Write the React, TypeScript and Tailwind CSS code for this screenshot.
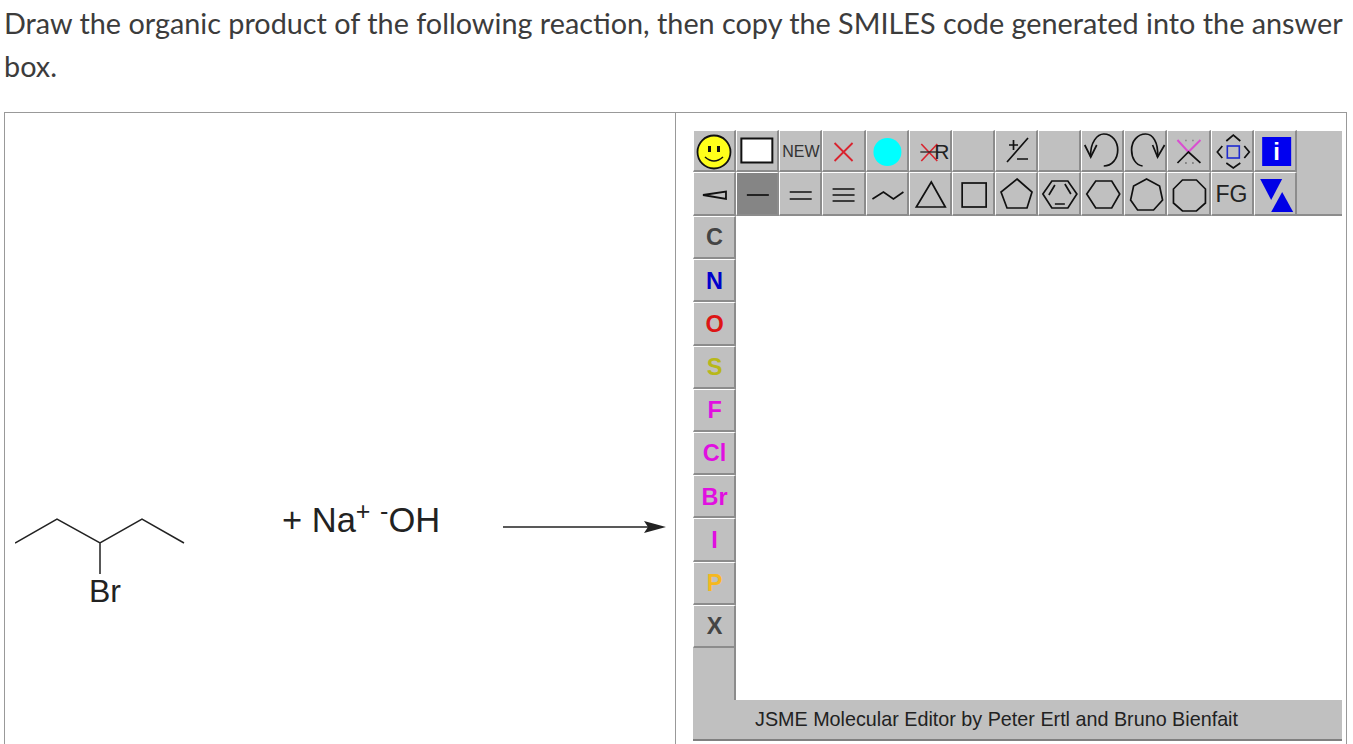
import React from "react";

const W = 43.14;
const line = "#111";

function Svg({ i, row, children }: { i: number; row: 0 | 1; children?: React.ReactNode }) {
  const x = 693 + i * W + 1;
  const y = row === 0 ? 131 : 173;
  const h = row === 0 ? 40 : 41;
  return (
    <svg width={W - 3} height={h} viewBox={`${x} ${y} ${W - 3} ${h}`} fill="none" stroke={line} strokeWidth={1.7} className="block overflow-visible">
      {children}
    </svg>
  );
}

function Cell({ children, dark, h }: { children?: React.ReactNode; dark?: boolean; h: string }) {
  return (
    <div
      className={`${h} w-[43.14px] box-border flex items-center justify-start border-t border-l border-r-2 border-b-2 border-t-white border-l-white border-r-[#8c8c8c] border-b-[#8c8c8c] ${
        dark ? "bg-[#858585]" : "bg-[#c0c0c0]"
      }`}
    >
      {children}
    </div>
  );
}

const row1: React.ReactNode[] = [
  <Svg i={0} row={0} key="a">
    <circle cx={714} cy={152} r={16.5} fill="#ffff1a" strokeWidth={1.8} />
    <rect x={708} y={146} width={3} height={6} fill="#111" stroke="none" />
    <rect x={717} y={146} width={3} height={6} fill="#111" stroke="none" />
    <path d="M705 157 Q714 165 723 157" strokeWidth={1.6} />
  </Svg>,
  <Svg i={1} row={0} key="b">
    <rect x={741.5} y={138.5} width={31} height={24} fill="#fff" strokeWidth={2} />
  </Svg>,
  <span key="c" className="text-[16px] text-[#333] pl-[2px] pt-[3px]">NEW</span>,
  <Svg i={3} row={0} key="d">
    <path d="M835 143 L853 161 M853 143 L835 161" stroke="#d9232e" strokeWidth={1.8} />
  </Svg>,
  <Svg i={4} row={0} key="e">
    <circle cx={887} cy={152} r={14} fill="#00ffff" stroke="none" />
  </Svg>,
  <Svg i={5} row={0} key="f">
    <path d="M921 144 L937 161 M937 144 L921 161" stroke="#d9232e" strokeWidth={1.6} />
    <path d="M920 152 L938 152" stroke="#222" strokeWidth={1.3} />
    <text x={934} y={159} fontSize={21} fill="#222" stroke="none" fontFamily="Liberation Sans">R</text>
  </Svg>,
  <Svg i={6} row={0} key="g" />,
  <Svg i={7} row={0} key="h">
    <path d="M1007 162 L1028 138 M1017 159 L1028 159 M1009 145 L1018 145 M1013.500 140 L1013.500 150" />
  </Svg>,
  <Svg i={8} row={0} key="i" />,
  <Svg i={9} row={0} key="j">
    <path d="M1091 157 C1090 142 1098 134 1104 134 C1113 134 1118 142 1118 150 C1118 159 1112 166 1104 166" />
    <path d="M1085 145 L1091 157 L1097 145" />
  </Svg>,
  <Svg i={10} row={0} key="k">
    <path d="M1143 166 C1136 165 1132 158 1132 150 C1132 141 1138 134 1146 134 C1153 134 1159 142 1158 157" />
    <path d="M1153 145 L1158 157 L1165 145" />
  </Svg>,
  <Svg i={11} row={0} key="l">
    <path d="M1178 140 L1189 152 L1201 140 " stroke="#d94fd0" strokeWidth={2} />
    <path d="M1178 163 L1189 152 L1201 163" />
    <path d="M1186 140.500 h1 M1193 140.500 h1" stroke="#666" />
    <path d="M1186 163 h1 M1193 163 h1" stroke="#333" />
  </Svg>,
  <Svg i={12} row={0} key="m">
    <rect x={1227} y={146} width={12} height={12} stroke="#1f2bd0" strokeWidth={1.6} />
    <path d="M1226 141 L1233 135 L1240 141 M1226 163 L1233 168 L1240 163 M1222 146 L1217 152 L1222 158 M1244 146 L1249 152 L1244 158" />
  </Svg>,
  <Svg i={13} row={0} key="n">
    <rect x={1262} y={137} width={29} height={29} fill="#0000f0" stroke="none" />
    <text x={1276.500} y={160} fontSize={24} fontWeight={700} textAnchor="middle" fill="#fff" stroke="none" fontFamily="Liberation Sans">i</text>
  </Svg>,
];

const poly = (p: string) => <polygon points={p} />;

const row2: React.ReactNode[] = [
  <Svg i={0} row={1} key="a">
    <polygon points="703,195 726,191.500 726,199" strokeWidth={1.8} />
  </Svg>,
  <Svg i={1} row={1} key="b"><path d="M747 195 H769" /></Svg>,
  <Svg i={2} row={1} key="c"><path d="M790 192 H812 M790 199 H812" /></Svg>,
  <Svg i={3} row={1} key="d"><path d="M833 189 H855 M833 195 H855 M833 201 H855" /></Svg>,
  <Svg i={4} row={1} key="e"><path d="M872 199 L883 192 L893 199 L903 192" /></Svg>,
  <Svg i={5} row={1} key="f">{poly("916,207 931,182 945,207")}</Svg>,
  <Svg i={6} row={1} key="g"><rect x={962} y={183} width={24} height={24} /></Svg>,
  <Svg i={7} row={1} key="h">{poly("1017,179 1032,192 1027,208 1007,208 1001,192")}</Svg>,
  <Svg i={8} row={1} key="i">
    {poly("1043,194 1052,181 1068,181 1077,194 1068,208 1052,208")}
    <path d="M1049 195 L1055 185 M1065 184 L1071 194 M1055 204 L1065 204" />
  </Svg>,
  <Svg i={9} row={1} key="j">{poly("1087,194 1096,181 1112,181 1120,194 1112,208 1096,208")}</Svg>,
  <Svg i={10} row={1} key="k">{poly("1147,179 1160,186 1163,200 1154,210 1138,210 1131,200 1134,186")}</Svg>,
  <Svg i={11} row={1} key="l">{poly("1183,180 1197,180 1206,189 1206,203 1197,211 1183,211 1174,203 1174,189")}</Svg>,
  <span key="m" className="text-[23px] text-[#222] pl-[4px] pt-[2px]">FG</span>,
  <Svg i={13} row={1} key="n">
    <polygon points="1260,179 1282,179 1271,200" fill="#0000e6" stroke="none" />
    <polygon points="1282,192 1293,212 1271,212" fill="#0000e6" stroke="none" />
  </Svg>,
];

const atoms: [string, string][] = [
  ["C", "text-[#444444]"],
  ["N", "text-[#0000cc]"],
  ["O", "text-[#dd1515]"],
  ["S", "text-[#b8b81a]"],
  ["F", "text-[#e010e0]"],
  ["Cl", "text-[#e010e0]"],
  ["Br", "text-[#e010e0]"],
  ["I", "text-[#e010e0]"],
  ["P", "text-[#f5b820]"],
  ["X", "text-[#444444]"],
];

export default function App() {
  return (
    <div className="h-[744px] w-full overflow-hidden bg-white flex flex-col font-['Liberation_Sans',sans-serif]">
      <p className="font-['Lato',sans-serif] text-[28.8px] leading-[43px] text-[#3c3c3c] pl-[4px] pr-[6px] pt-[2px] h-[112px] shrink-0">
        Draw the organic product of the following reaction, then copy the SMILES code generated into the answer box.
      </p>
      <div className="flex-1 min-h-0 ml-[4px] w-[1343px] box-border border border-b-0 border-[#999999] flex">
        <div className="w-[671px] shrink-0 border-r border-[#999999] flex items-start pt-[405px] pl-[10px] text-[#222]">
          <div className="w-[170px] shrink-0 flex flex-col">
            <svg width={170} height={57} viewBox="0 0 170 57" fill="none" stroke="#222" strokeWidth={1.5} className="block">
              <path d="M0 25 L42 1 L85 25 L127 1 L169 25 M85 25 V56" />
            </svg>
            <span className="text-[32px] leading-[34px] ml-[74px] -mt-px">Br</span>
          </div>
          <div className="ml-[97px] text-[34.5px] leading-[40px] w-[221px] shrink-0 -mt-[18px] whitespace-nowrap">
            + Na<sup className="text-[25px] -top-[12px]">+</sup> <sup className="text-[25px] -top-[12px]">-</sup>OH
          </div>
          <svg width={164} height={16} viewBox="0 0 164 16" className="block shrink-0 mt-[1px]" fill="none">
            <path d="M0 8 H149" stroke="#222" strokeWidth={1.5} />
            <polygon points="141,2 163,8 141,14 145,8" fill="#222" />
          </svg>
        </div>
        <div className="flex-1 min-w-0 pt-[17px] pl-[17px]">
          <div className="w-[649px] flex flex-col">
            <div className="flex">
              <div className="flex flex-col">
                <div className="flex">
                  {row1.map((c, i) => (
                    <Cell key={i} h="h-[42px]">{c}</Cell>
                  ))}
                </div>
                <div className="flex">
                  {row2.map((c, i) => (
                    <Cell key={i} h="h-[44px]" dark={i === 1}>{c}</Cell>
                  ))}
                </div>
              </div>
              <div className="flex-1 bg-[#c0c0c0] mt-px border-b-2 border-[#8c8c8c]" />
            </div>
            <div className="flex h-[484px]">
              <div className="w-[43.14px] flex flex-col">
                {atoms.map(([a, c]) => (
                  <div
                    key={a}
                    className={`h-[43.2px] box-border flex items-center justify-center pt-[2px] pl-[1px] border-t border-l border-r-2 border-b-2 border-t-white border-l-white border-r-[#8c8c8c] border-b-[#8c8c8c] bg-[#c0c0c0] font-bold text-[23.5px] ${c}`}
                  >
                    {a}
                  </div>
                ))}
                <div className="flex-1 bg-[#c0c0c0] border-r-2 border-[#8c8c8c]" />
              </div>
              <div className="flex-1 bg-white" />
            </div>
            <div className="h-[41px] box-border bg-[#c0c0c0] border-b-2 border-[#808080] pl-[62px] flex items-center text-[19.75px] text-[#222] whitespace-nowrap">
              JSME Molecular Editor by Peter Ertl and Bruno Bienfait
            </div>
          </div>
        </div>
      </div>
    </div>
  );
}
